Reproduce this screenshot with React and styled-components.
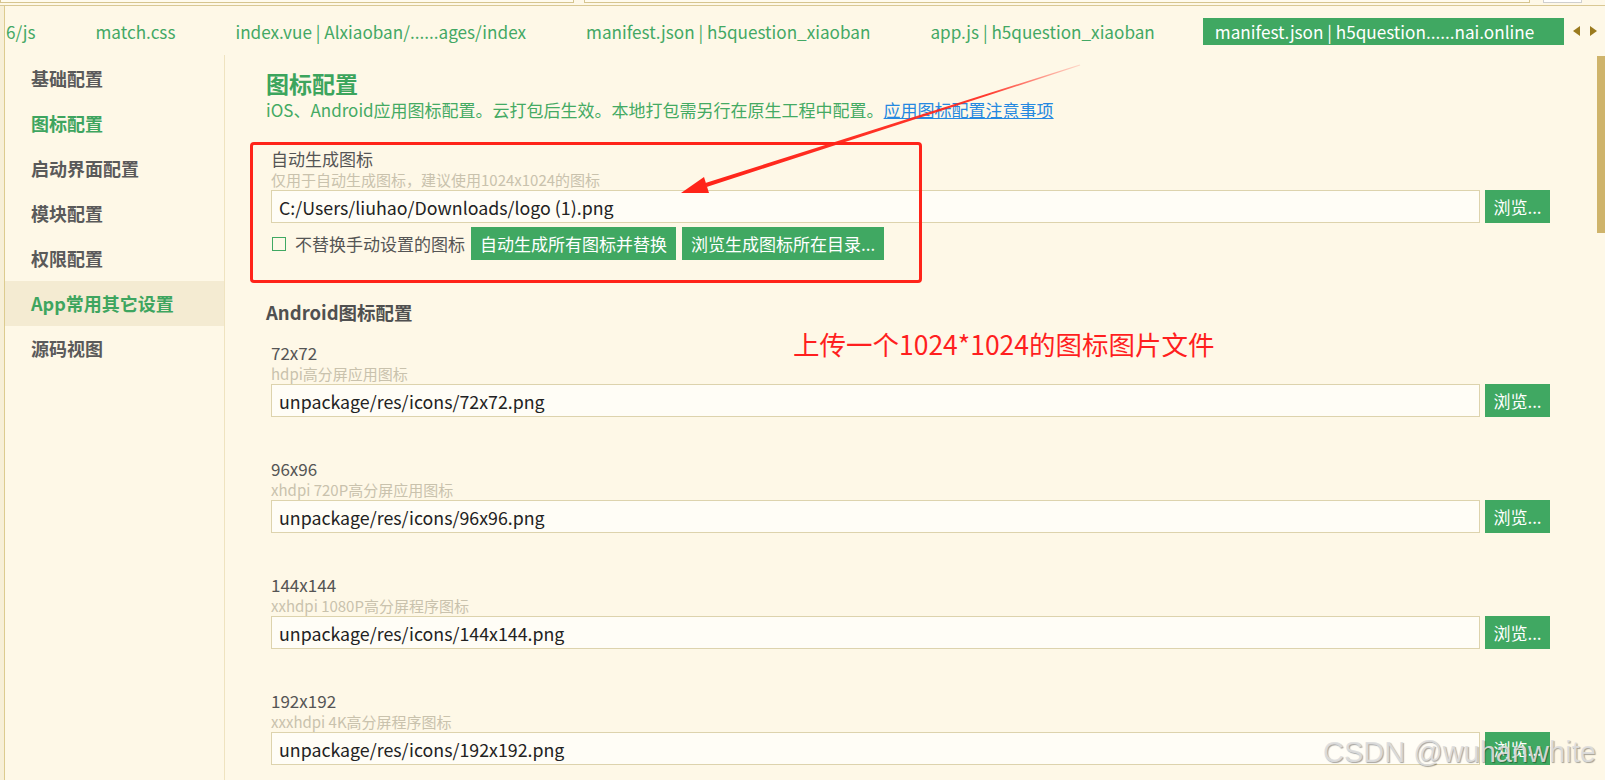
import React from 'react';
import styled, { createGlobalStyle } from 'styled-components';

const GlobalStyle = createGlobalStyle`
  html, body {
    margin: 0;
    padding: 0;
  }
  body {
    background: #fef8e7;
    font-family: "Noto Sans CJK SC", "Noto Sans", sans-serif;
    overflow: hidden;
  }
`;

const tabs = [
  { name: '6/js', cut: true },
  { name: 'match.css' },
  { name: 'index.vue | Alxiaoban/......ages/index' },
  { name: 'manifest.json | h5question_xiaoban' },
  { name: 'app.js | h5question_xiaoban' },
  { name: 'manifest.json | h5question......nai.online', active: true },
];

const menu = [
  { label: '基础配置' },
  { label: '图标配置', current: true },
  { label: '启动界面配置' },
  { label: '模块配置' },
  { label: '权限配置' },
  { label: 'App常用其它设置', hover: true },
  { label: '源码视图' },
];

const androidIcons = [
  { size: '72x72', hint: 'hdpi高分屏应用图标' },
  { size: '96x96', hint: 'xhdpi 720P高分屏应用图标' },
  { size: '144x144', hint: 'xxhdpi 1080P高分屏程序图标' },
  { size: '192x192', hint: 'xxxhdpi 4K高分屏程序图标' },
];

function App() {
  return (
    <Page>
      <GlobalStyle />
      <TopStrip>
        <SearchBox $width={574} />
        <SearchBox $width={946} $gap={10} />
        <SearchBox $width={39} $gap={13} $plain />
      </TopStrip>

      <Frame>
        <LeftEdge />
        <Workspace>
          <TabBar>
            <TabList>
              {tabs.map((t) => (
                <Tab key={t.name} $active={t.active} $cut={t.cut}>
                  {t.name}
                </Tab>
              ))}
            </TabList>
            <TabArrows>
              <svg width="7" height="10" viewBox="0 0 7 10">
                <polygon points="7,0 7,10 0,5" fill="#9b7b1f" />
              </svg>
              <svg width="7" height="10" viewBox="0 0 7 10">
                <polygon points="0,0 0,10 7,5" fill="#9b7b1f" />
              </svg>
            </TabArrows>
          </TabBar>

          <Body>
            <Sidebar>
              {menu.map((m) => (
                <MenuItem key={m.label} $current={m.current} $hover={m.hover}>
                  {m.label}
                </MenuItem>
              ))}
            </Sidebar>

            <Main>
              <Title>图标配置</Title>
              <Subtitle>
                iOS、Android应用图标配置。云打包后生效。本地打包需另行在原生工程中配置。
                <DocLink href="#">应用图标配置注意事项</DocLink>
              </Subtitle>

              <AutoSection>
                <FieldLabel>自动生成图标</FieldLabel>
                <FieldHint>仅用于自动生成图标，建议使用1024x1024的图标</FieldHint>
                <FieldRow>
                  <PathInput readOnly value="C:/Users/liuhao/Downloads/logo (1).png" />
                  <BrowseButton>浏览...</BrowseButton>
                </FieldRow>
                <CheckRow>
                  <CheckBox />
                  <CheckLabel>不替换手动设置的图标</CheckLabel>
                  <ActionButton>自动生成所有图标并替换</ActionButton>
                  <ActionButton>浏览生成图标所在目录...</ActionButton>
                </CheckRow>
              </AutoSection>

              <SectionTitle>Android图标配置</SectionTitle>
              <IconList>
                {androidIcons.map((icon) => (
                  <IconField key={icon.size}>
                    <FieldLabel>{icon.size}</FieldLabel>
                    <FieldHint>{icon.hint}</FieldHint>
                    <FieldRow>
                      <PathInput readOnly value={`unpackage/res/icons/${icon.size}.png`} />
                      <BrowseButton>浏览...</BrowseButton>
                    </FieldRow>
                  </IconField>
                ))}
              </IconList>
            </Main>

            <ScrollTrack>
              <ScrollThumb />
            </ScrollTrack>
          </Body>
        </Workspace>
      </Frame>

      {/* annotations drawn over the screenshot */}
      <RedFrame />
      <ArrowLayer width="1605" height="780" viewBox="0 0 1605 780">
        <defs>
          <linearGradient id="fade" x1="1080" y1="65" x2="706" y2="185" gradientUnits="userSpaceOnUse">
            <stop offset="0" stopColor="#ff2419" stopOpacity="0.15" />
            <stop offset="0.25" stopColor="#ff2419" stopOpacity="0.9" />
            <stop offset="1" stopColor="#ff2419" />
          </linearGradient>
        </defs>
        <polygon points="1080.2,65.5 706.6,187 705.4,183 1079.8,64.5" fill="url(#fade)" />
        <polygon points="681,193 709,193 704,177" fill="#ff2419" />
      </ArrowLayer>
      <Note>上传一个1024*1024的图标图片文件</Note>
      <Watermark>CSDN @wuhanwhite</Watermark>
    </Page>
  );
}

const Page = styled.div`
  position: relative;
  width: 1605px;
  height: 780px;
  overflow: hidden;
  display: flex;
  flex-direction: column;
`;

const TopStrip = styled.div`
  display: flex;
  height: 5px;
  border-bottom: 1px solid #d9c894;
  flex-shrink: 0;
`;

const SearchBox = styled.div`
  box-sizing: border-box;
  width: ${(p) => p.$width}px;
  margin-left: ${(p) => p.$gap || 0}px;
  height: 3px;
  border: 1px solid ${(p) => (p.$plain ? '#cfcfcf' : '#d6c58f')};
  border-top: none;
  background: ${(p) => (p.$plain ? '#ffffff' : '#fffbee')};
`;

const Frame = styled.div`
  flex: 1;
  display: flex;
  min-height: 0;
`;

const LeftEdge = styled.div`
  width: 4px;
  background: #f7efd7;
  border-right: 1px solid #dccb8f;
  flex-shrink: 0;
`;

const Workspace = styled.div`
  flex: 1;
  display: flex;
  flex-direction: column;
  min-width: 0;
`;

const TabBar = styled.div`
  height: 49px;
  display: flex;
  align-items: center;
  flex-shrink: 0;
`;

const TabList = styled.div`
  flex: 1;
  display: flex;
  align-items: center;
  gap: 36px;
  overflow: hidden;
`;

const Tab = styled.div`
  flex-shrink: 0;
  height: 27px;
  line-height: 27px;
  margin-top: 1px;
  padding: ${(p) => (p.$active ? '0 30px 0 12px' : '0 12px')};
  margin-left: ${(p) => (p.$cut ? '-11px' : '0')};
  font-size: 17.15px;
  white-space: nowrap;
  color: ${(p) => (p.$active ? '#ffffff' : '#43a864')};
  background: ${(p) => (p.$active ? '#40a862' : 'transparent')};
`;

const TabArrows = styled.div`
  display: flex;
  align-items: center;
  gap: 10px;
  padding: 0 8px 0 8px;
`;

const Body = styled.div`
  flex: 1;
  display: flex;
  min-height: 0;
`;

const Sidebar = styled.nav`
  width: 219px;
  flex-shrink: 0;
  padding-top: 1px;
  border-right: 1px solid #efe3c0;
`;

const MenuItem = styled.div`
  height: 45px;
  line-height: 45px;
  padding-left: 26px;
  font-size: 18px;
  font-weight: 700;
  color: ${(p) => (p.$current || p.$hover ? '#3ea55f' : '#5a5a5a')};
  background: ${(p) => (p.$hover ? '#f4ebd2' : 'transparent')};
`;

const Main = styled.main`
  flex: 1;
  min-width: 0;
  padding: 13px 47px 0 41px;
`;

const Title = styled.h2`
  margin: 0;
  font-size: 23px;
  line-height: 30px;
  font-weight: 700;
  color: #3ca55d;
`;

const Subtitle = styled.p`
  margin: 0;
  font-size: 17px;
  line-height: 24px;
  color: #44aa63;
  white-space: nowrap;
`;

const DocLink = styled.a`
  color: #2588e0;
  text-decoration: underline;
`;

const AutoSection = styled.section`
  margin: 26px 0 0 5px;
`;

const FieldLabel = styled.div`
  font-size: 17px;
  line-height: 22px;
  color: #555555;
`;

const FieldHint = styled.div`
  font-size: 15px;
  line-height: 20px;
  color: #c9c2ad;
`;

const FieldRow = styled.div`
  display: flex;
  gap: 5px;
  height: 33px;
`;

const PathInput = styled.input`
  flex: 1;
  min-width: 0;
  box-sizing: border-box;
  height: 33px;
  margin: 0;
  padding: 0 7px;
  border: 1px solid #ddd3ad;
  border-radius: 0;
  background: #fffdf6;
  font: inherit;
  font-size: 17.8px;
  color: #222222;
  outline: none;
`;

const GreenButton = styled.button`
  box-sizing: border-box;
  height: 33px;
  margin: 0;
  border: none;
  border-radius: 0;
  background: #40a862;
  color: #ffffff;
  font: inherit;
  font-size: 17px;
  white-space: nowrap;
`;

const BrowseButton = styled(GreenButton)`
  width: 65px;
  padding: 0;
`;

const ActionButton = styled(GreenButton)`
  padding: 0 9px;
`;

const CheckRow = styled.div`
  display: flex;
  align-items: center;
  gap: 6px;
  height: 33px;
  margin-top: 4px;
`;

const CheckBox = styled.span`
  box-sizing: border-box;
  width: 14px;
  height: 14px;
  margin: 0 3px 0 1px;
  border: 1px solid #40a862;
`;

const CheckLabel = styled.span`
  font-size: 17px;
  color: #555555;
`;

const SectionTitle = styled.h3`
  margin: 40px 0 0;
  font-size: 18.5px;
  line-height: 24px;
  font-weight: 700;
  color: #505050;
`;

const IconList = styled.div`
  margin: 18px 0 0 5px;
`;

const IconField = styled.div`
  margin-bottom: 41px;
`;

const ScrollTrack = styled.div`
  width: 8px;
  flex-shrink: 0;
`;

const ScrollThumb = styled.div`
  margin-top: 1px;
  height: 177px;
  background: #cfb46b;
`;

const RedFrame = styled.div`
  position: absolute;
  left: 250px;
  top: 142px;
  width: 672px;
  height: 141px;
  box-sizing: border-box;
  border: 3px solid #ff2419;
  border-radius: 4px;
  pointer-events: none;
`;

const ArrowLayer = styled.svg`
  position: absolute;
  left: 0;
  top: 0;
  pointer-events: none;
`;

const Note = styled.div`
  position: absolute;
  left: 793px;
  top: 326px;
  font-size: 26.5px;
  line-height: 36px;
  color: #ff1f1f;
  white-space: nowrap;
`;

const Watermark = styled.div`
  position: absolute;
  left: 1323px;
  top: 734px;
  font-family: "Liberation Sans", Arial, sans-serif;
  font-size: 29px;
  line-height: 36px;
  color: rgba(222, 222, 222, 0.92);
  text-shadow: 1px 1px 1px rgba(0, 0, 0, 0.35);
  white-space: nowrap;
  pointer-events: none;
`;

export default App;
